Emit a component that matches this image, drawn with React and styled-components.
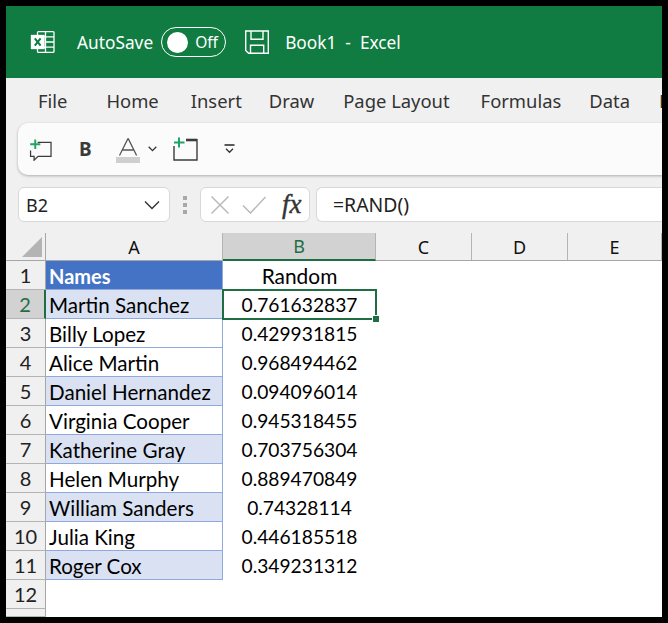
import React from 'react';
import styled, { createGlobalStyle } from 'styled-components';

const GlobalStyle = createGlobalStyle`
  html, body {
    margin: 0;
    padding: 0;
    background: #000;
  }
`;

const uiFont = `"Noto Sans", "Open Sans", sans-serif`;
const cellFont = `Lato, "Liberation Sans", sans-serif`;

const Frame = styled.div`
  box-sizing: border-box;
  width: 668px;
  height: 623px;
  padding: 6px;
  background: #000;
  overflow: hidden;
`;

const Window = styled.div`
  width: 656px;
  height: 611px;
  background: #f0f0f0;
  overflow: hidden;
  display: flex;
  flex-direction: column;
`;

const TitleBar = styled.div`
  height: 72px;
  flex: none;
  background: #107c41;
  color: #fff;
  display: flex;
  align-items: center;
  padding-left: 24px;
  font-family: ${uiFont};
  font-size: 17.3px;
`;

const AppIcon = styled.svg`
  width: 26px;
  height: 26px;
  margin-right: 21px;
`;

const Toggle = styled.div`
  box-sizing: border-box;
  width: 65px;
  height: 30px;
  margin-left: 8px;
  margin-right: 18px;
  border: 1px solid #fff;
  border-radius: 15px;
  display: flex;
  align-items: center;
  padding-left: 5px;
  gap: 7px;
`;

const Knob = styled.span`
  width: 21px;
  height: 21px;
  border-radius: 50%;
  background: #fff;
`;

const ToggleText = styled.span`
  font-size: 15.5px;
`;

const SaveIcon = styled.svg`
  width: 26px;
  height: 26px;
  margin-right: 15px;
`;

const Title = styled.span`
  white-space: pre;
`;

const TabRow = styled.div`
  height: 45px;
  flex: none;
  display: flex;
  align-items: center;
  padding-left: 32px;
  white-space: nowrap;
  overflow: hidden;
`;

const Tab = styled.span`
  font-family: ${uiFont};
  font-size: 18.4px;
  color: #333;
  margin-right: ${(p) => p.$gap}px;
`;

const Toolbar = styled.div`
  height: 52px;
  flex: none;
  margin-left: 12px;
  margin-right: -20px;
  background: #fbfbfb;
  border-radius: 10px;
  box-shadow: 0 1px 3px rgba(0, 0, 0, 0.28);
  display: flex;
  align-items: center;
  padding-left: 11px;
`;

const ToolIcon = styled.svg`
  flex: none;
  margin-left: ${(p) => p.$left || 0}px;
  margin-top: ${(p) => p.$top || 0}px;
`;

const BoldButton = styled.span`
  font-family: ${uiFont};
  font-weight: 700;
  font-size: 19px;
  color: #3a3a3a;
  margin-left: 27px;
  width: 12px;
`;

const FormulaBar = styled.div`
  height: 35px;
  flex: none;
  margin-top: 12px;
  margin-left: 12px;
  display: flex;
  align-items: stretch;
`;

const NameBox = styled.div`
  box-sizing: border-box;
  width: 152px;
  background: #fff;
  border: 1px solid #d8d8d8;
  border-radius: 6px;
  display: flex;
  align-items: center;
  justify-content: space-between;
  padding: 0 9px 0 7px;
  font-family: ${uiFont};
  font-size: 18px;
  color: #222;
`;

const Dots = styled.div`
  width: 30px;
  flex: none;
  display: flex;
  flex-direction: column;
  align-items: center;
  justify-content: center;
  gap: 3px;

  span {
    width: 4px;
    height: 4px;
    background: #a8a8a8;
  }
`;

const FxBox = styled.div`
  box-sizing: border-box;
  width: 110px;
  background: #fff;
  border: 1px solid #d8d8d8;
  border-radius: 6px;
  display: flex;
  align-items: center;
  padding-left: 9px;
  gap: 12px;
`;

const FxText = styled.span`
  font-family: "Liberation Serif", serif;
  font-style: italic;
  font-size: 27px;
  line-height: 1;
  margin-left: 4px;
  color: #333;
  -webkit-text-stroke: 0.4px #333;
`;

const FormulaInput = styled.div`
  box-sizing: border-box;
  flex: 1;
  margin-left: 6px;
  background: #fff;
  border: 1px solid #d8d8d8;
  border-right: none;
  border-radius: 6px 0 0 6px;
  display: flex;
  align-items: center;
  padding-left: 16px;
  font-family: ${uiFont};
  font-size: 19.4px;
  color: #222;
`;

const Sheet = styled.div`
  margin-top: 11px;
  flex: 1;
  display: grid;
  grid-template-columns: 40px 177px 153px 96px 96px 94px;
  grid-template-rows: 28px repeat(12, 29px) 1fr;
  background: #fff;
  font-family: ${cellFont};
  font-size: 20.6px;
  color: #000;
`;

const Corner = styled.div`
  box-sizing: border-box;
  background: #f0f0f0;
  border-right: 1px solid #a6a6a6;
  border-bottom: 1px solid #a6a6a6;
  display: flex;
  align-items: flex-end;
  justify-content: flex-end;
  padding: 0 3px 3px 0;
`;

const ColHead = styled.div`
  box-sizing: border-box;
  background: ${(p) => (p.$active ? '#d2d2d2' : '#f0f0f0')};
  color: ${(p) => (p.$active ? '#1f6e43' : '#111')};
  border-bottom: ${(p) => (p.$active ? '2px solid #1f6e43' : '1px solid #a6a6a6')};
  border-right: 1px solid #b4b4b4;
  display: flex;
  align-items: center;
  justify-content: center;
  font-family: ${uiFont};
  font-size: 18px;
`;

const RowHead = styled.div`
  box-sizing: border-box;
  background: ${(p) => (p.$active ? '#d2d2d2' : '#f0f0f0')};
  color: ${(p) => (p.$active ? '#1f6e43' : '#222')};
  border-bottom: 1px solid #b4b4b4;
  border-right: ${(p) => (p.$active ? '2px solid #1f6e43' : '1px solid #a6a6a6')};
  display: flex;
  align-items: center;
  justify-content: center;
  font-size: 20px;
`;

const NameCell = styled.div`
  box-sizing: border-box;
  display: flex;
  align-items: center;
  padding: 1px 0 0 3px;
  white-space: nowrap;
  background: ${(p) => (p.$head ? '#4472c4' : p.$band ? '#d9e1f2' : '#fff')};
  color: ${(p) => (p.$head ? '#fff' : '#000')};
  font-weight: ${(p) => (p.$head ? 700 : 400)};
  font-size: ${(p) => (p.$head ? '20px' : 'inherit')};
  border-bottom: 1px solid #8ea9db;
  border-right: 1px solid #8ea9db;
`;

const ValueCell = styled.div`
  position: relative;
  box-sizing: border-box;
  display: flex;
  align-items: center;
  justify-content: center;
  font-size: ${(p) => (p.$word ? '20.9px' : '19.2px')};
  ${(p) => p.$selected && 'outline: 2px solid #1f6e43; outline-offset: -1px; z-index: 1;'}
`;

const FillHandle = styled.span`
  position: absolute;
  right: -4px;
  bottom: -4px;
  width: 6px;
  height: 6px;
  background: #1f6e43;
  border: 1px solid #fff;
  box-sizing: content-box;
`;

const Blank = styled.div``;

const rows = [
  ['Martin Sanchez', '0.761632837', true],
  ['Billy Lopez', '0.429931815', false],
  ['Alice Martin', '0.968494462', false],
  ['Daniel Hernandez', '0.094096014', true],
  ['Virginia Cooper', '0.945318455', false],
  ['Katherine Gray', '0.703756304', true],
  ['Helen Murphy', '0.889470849', false],
  ['William Sanders', '0.74328114', true],
  ['Julia King', '0.446185518', false],
  ['Roger Cox', '0.349231312', true],
];

const tabs = [
  ['File', 39],
  ['Home', 32],
  ['Insert', 27],
  ['Draw', 29],
  ['Page Layout', 31],
  ['Formulas', 28],
  ['Data', 29],
  ['Review', 0],
];

const ExcelLogo = () => (
  <AppIcon viewBox="0 0 26 26" fill="none" stroke="#fff" strokeWidth="1.3">
    <rect x="7.5" y="2.6" width="16.5" height="20.8" rx="1" />
    <path d="M15.5 2.6v20.8M7.5 7.8H24M15.5 13H24M7.5 18.2H24" />
    <rect x="1.5" y="6.5" width="12.5" height="13" fill="#fff" stroke="#fff" />
    <path d="M4.8 9.3l5.8 7.4M10.6 9.3l-5.8 7.4" stroke="#107c41" strokeWidth="2" />
  </AppIcon>
);

const SaveGlyph = () => (
  <SaveIcon viewBox="0 0 26 26" fill="none" stroke="#fff" strokeWidth="1.4">
    <path d="M1.7 2h22.6v22.3H4.6l-2.9-2.9z" />
    <path d="M7 2v8.2h12V2M6.5 24.3v-8h13.2v8" />
  </SaveIcon>
);

const CommentIcon = () => (
  <ToolIcon $top={2} width="23" height="22" viewBox="0 0 24 23" fill="none">
    <path d="M9 3.5h14v14.7H9.5l-4.2 4v-4H1.6V12" stroke="#3c3c3c" strokeWidth="1.3" />
    <path d="M6.5 0.5v10M1.2 5.5h10.6" stroke="#21a366" strokeWidth="2" />
  </ToolIcon>
);

const FontColorIcon = () => (
  <ToolIcon $left={25} $top={2} width="24" height="25" viewBox="0 0 24 25" fill="none">
    <path d="M3.5 17.5L11.8 1h.6l8.2 16.5M6.5 12h11.2" stroke="#555" strokeWidth="1.3" />
    <rect x="0" y="19" width="24" height="6" fill="#cfcfcf" />
  </ToolIcon>
);

const SmallChevron = () => (
  <ToolIcon $left={8} width="9" height="6" viewBox="0 0 9 6" fill="none">
    <path d="M0.7 0.8l3.8 3.8 3.8-3.8" stroke="#333" strokeWidth="1.3" />
  </ToolIcon>
);

const NewSheetIcon = () => (
  <ToolIcon $left={16} width="25" height="24" viewBox="0 0 25 24" fill="none">
    <path d="M1 9v14h23V2.8h-11" stroke="#3c3c3c" strokeWidth="1.4" />
    <path d="M13 3h11" stroke="#3c3c3c" strokeWidth="2.6" />
    <path d="M6 0.5v10M1 5.5h10.5" stroke="#21a366" strokeWidth="2" />
  </ToolIcon>
);

const OverflowIcon = () => (
  <ToolIcon $left={26} width="11" height="10" viewBox="0 0 11 10" fill="none">
    <path d="M0.5 1h10" stroke="#333" strokeWidth="1.6" />
    <path d="M2 4.8l3.5 3.5L9 4.8" stroke="#333" strokeWidth="1.3" />
  </ToolIcon>
);

const App = () => {
  return (
    <Frame>
      <GlobalStyle />
      <Window>
        <TitleBar>
          <ExcelLogo />
          <span>AutoSave</span>
          <Toggle>
            <Knob />
            <ToggleText>Off</ToggleText>
          </Toggle>
          <SaveGlyph />
          <Title>Book1  -  Excel</Title>
        </TitleBar>
        <TabRow>
          {tabs.map(([label, gap]) => (
            <Tab key={label} $gap={gap}>
              {label}
            </Tab>
          ))}
        </TabRow>
        <Toolbar>
          <CommentIcon />
          <BoldButton>B</BoldButton>
          <FontColorIcon />
          <SmallChevron />
          <NewSheetIcon />
          <OverflowIcon />
        </Toolbar>
        <FormulaBar>
          <NameBox>
            B2
            <svg width="16" height="10" viewBox="0 0 16 10" fill="none">
              <path d="M1 1.5l7 7 7-7" stroke="#333" strokeWidth="1.4" />
            </svg>
          </NameBox>
          <Dots>
            <span />
            <span />
            <span />
          </Dots>
          <FxBox>
            <svg width="20" height="20" viewBox="0 0 20 20" fill="none">
              <path d="M1.5 1.5l17 17M18.5 1.5l-17 17" stroke="#b9b9b9" strokeWidth="1.5" />
            </svg>
            <svg width="24" height="18" viewBox="0 0 24 18" fill="none">
              <path d="M1 9.5l7.5 7.5L23.5 1" stroke="#b9b9b9" strokeWidth="1.5" />
            </svg>
            <FxText>fx</FxText>
          </FxBox>
          <FormulaInput>=RAND()</FormulaInput>
        </FormulaBar>
        <Sheet>
          <Corner>
            <svg width="20" height="20" viewBox="0 0 20 20">
              <path d="M20 0v20H0z" fill="#b4b4b4" />
            </svg>
          </Corner>
          <ColHead>A</ColHead>
          <ColHead $active>B</ColHead>
          <ColHead>C</ColHead>
          <ColHead>D</ColHead>
          <ColHead>E</ColHead>

          <RowHead>1</RowHead>
          <NameCell $head>Names</NameCell>
          <ValueCell $word>Random</ValueCell>
          <Blank />
          <Blank />
          <Blank />

          {rows.map(([name, value, band], i) => (
            <React.Fragment key={name}>
              <RowHead $active={i === 0}>{i + 2}</RowHead>
              <NameCell $band={band}>{name}</NameCell>
              <ValueCell $selected={i === 0}>
                {value}
                {i === 0 && <FillHandle />}
              </ValueCell>
              <Blank />
              <Blank />
              <Blank />
            </React.Fragment>
          ))}

          <RowHead>12</RowHead>
          <Blank />
          <Blank />
          <Blank />
          <Blank />
          <Blank />

          <RowHead />
        </Sheet>
      </Window>
    </Frame>
  );
};

export default App;
